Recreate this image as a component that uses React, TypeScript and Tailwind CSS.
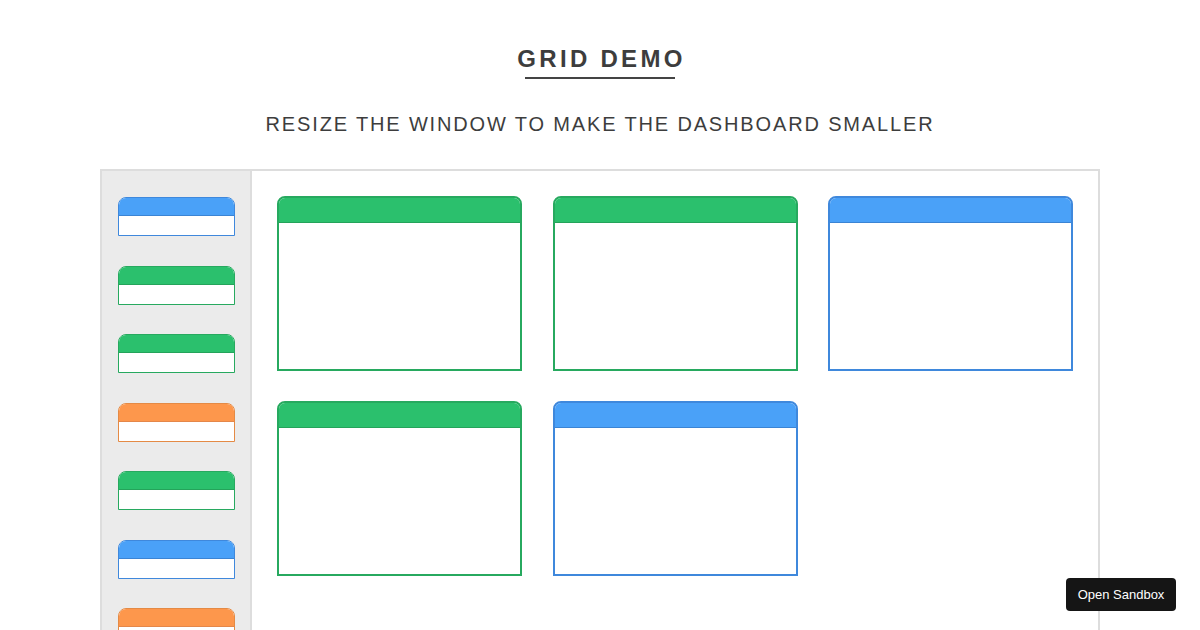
import React from 'react';

type Tone = 'green' | 'blue' | 'orange';

const tones: Record<Tone, { border: string; head: string }> = {
  green: { border: 'border-[#27a95f]', head: 'bg-[#2bc06d] border-[#24a35a]' },
  blue: { border: 'border-[#3f88dc]', head: 'bg-[#4aa1f8] border-[#3b84d4]' },
  orange: { border: 'border-[#e48a45]', head: 'bg-[#fd974c] border-[#e4874a]' },
};

const sidebar: Tone[] = ['blue', 'green', 'green', 'orange', 'green', 'blue', 'orange'];
const widgets: Tone[] = ['green', 'green', 'blue', 'green', 'blue'];

function MiniCard({ tone }: { tone: Tone }) {
  const t = tones[tone];
  return (
    <div className={`w-[117px] h-[39px] border ${t.border} rounded-t-[8px] bg-white overflow-hidden shrink-0`}>
      <div className={`h-[18px] border-b ${t.head}`} />
    </div>
  );
}

function Widget({ tone }: { tone: Tone }) {
  const t = tones[tone];
  return (
    <div className={`h-[175px] border-2 ${t.border} rounded-t-[8px] bg-white overflow-hidden`}>
      <div className={`h-[25px] border-b ${t.head}`} />
    </div>
  );
}

export default function App() {
  return (
    <div className="min-h-screen bg-white text-[#3d3d3d]" style={{ fontFamily: '"Liberation Sans", Arial, sans-serif' }}>
      <header className="flex flex-col items-center pt-[45px]">
        <h1 className="text-[24px] leading-[28px] font-bold tracking-[3.3px] pl-[3px]">GRID DEMO</h1>
        <div className="w-[150px] h-[2px] bg-[#444] mt-[4px]" />
        <p className="mt-[33px] text-[20px] leading-[24px] tracking-[1.85px]">
          RESIZE THE WINDOW TO MAKE THE DASHBOARD SMALLER
        </p>
      </header>

      <div className="mx-auto mt-[33px] w-[1000px] border-2 border-[#dddddd] flex">
        <aside className="w-[150px] shrink-0 bg-[#ebebeb] border-r-2 border-[#dddddd] pl-[16px] pt-[26px] pb-[20px] flex flex-col gap-[29.5px]">
          {sidebar.map((t, i) => (
            <MiniCard key={i} tone={t} />
          ))}
        </aside>
        <main className="flex-1 pl-[25px] pr-[25px] pt-[25px]">
          <div className="grid grid-cols-[245px_245px_245px] gap-x-[30.5px] gap-y-[30px]">
            {widgets.map((t, i) => (
              <Widget key={i} tone={t} />
            ))}
          </div>
        </main>
      </div>

      <button className="fixed right-[24px] bottom-[19px] w-[110px] h-[33px] rounded-[4px] bg-[#151515] text-white text-[13px]">
        Open Sandbox
      </button>
    </div>
  );
}
